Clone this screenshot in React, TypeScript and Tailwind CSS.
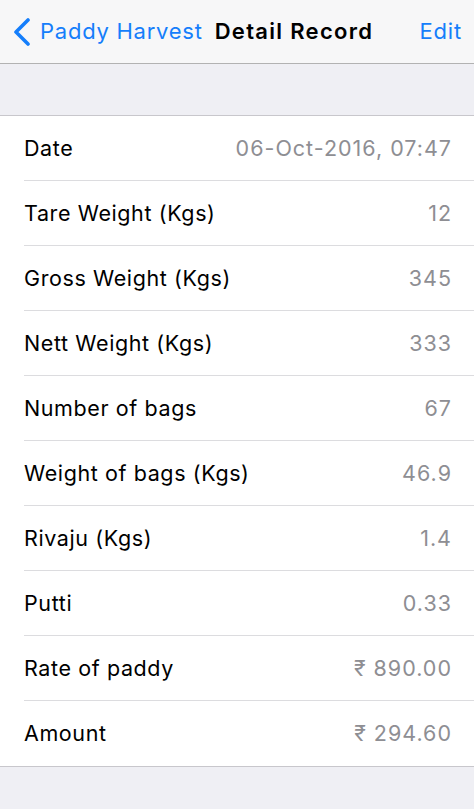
import React from "react";

const rows: [string, string][] = [
  ["Date", "06-Oct-2016, 07:47"],
  ["Tare Weight (Kgs)", "12"],
  ["Gross Weight (Kgs)", "345"],
  ["Nett Weight (Kgs)", "333"],
  ["Number of bags", "67"],
  ["Weight of bags (Kgs)", "46.9"],
  ["Rivaju (Kgs)", "1.4"],
  ["Putti", "0.33"],
  ["Rate of paddy", "₹ 890.00"],
  ["Amount", "₹ 294.60"],
];

export default function App() {
  return (
    <div
      className="w-[474px] h-[809px] bg-[#efeff4] overflow-hidden"
      style={{ fontFamily: "Inter, 'Noto Sans', sans-serif" }}
    >
      <div className="h-[64px] bg-[#f7f7f8] border-b border-[#b2b2b2] flex items-center pl-[12px] pr-[12px]">
        <div className="flex items-center text-[#157efb] gap-[9px]">
          <svg width="19" height="28" viewBox="0 0 19 28" fill="none">
            <path d="M16 2 L4 14 L16 26" stroke="#157efb" strokeWidth="3.6" strokeLinecap="round" strokeLinejoin="round" />
          </svg>
          <span className="text-[22px] tracking-[0.75px]">Paddy Harvest</span>
        </div>
        <span className="ml-[12px] text-[22px] font-semibold tracking-[1.3px] text-black">Detail Record</span>
        <span className="ml-auto text-[22px] tracking-[0.8px] text-[#157efb]">Edit</span>
      </div>
      <div className="h-[51px]" />
      <div className="bg-white border-t border-b border-[#c8c7cc]">
        {rows.map(([label, value], i) => (
          <div key={label} className="pl-[24px]">
            <div
              className={
                "h-[65px] flex items-center pr-[22px] " +
                (i < rows.length - 1 ? "border-b border-[#dcdcdf]" : "")
              }
            >
              <span className="text-[21.5px] tracking-[0.6px] text-black">{label}</span>
              <span className="ml-auto text-[21.5px] tracking-[1px] text-[#8e8e93]">{value}</span>
            </div>
          </div>
        ))}
      </div>
    </div>
  );
}
